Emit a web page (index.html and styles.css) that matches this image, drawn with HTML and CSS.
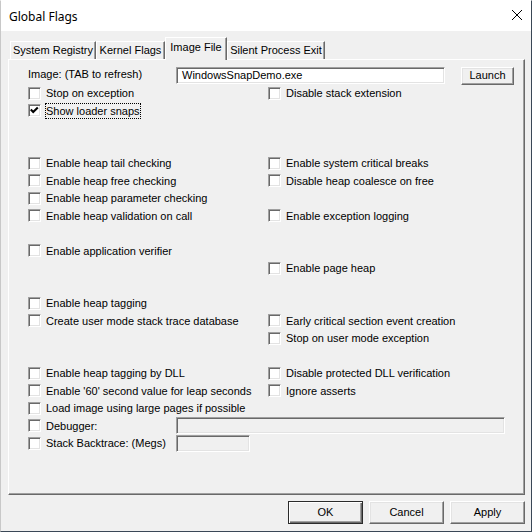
FILE: index.html
```html
<!DOCTYPE html>
<html>
<head>
<meta charset="utf-8">
<link rel="stylesheet" href="styles.css">
</head>
<body>
<div class="window">
  <div class="titlebar">
    <span class="title">Global Flags</span>
    <svg class="close" width="10" height="10" viewBox="0 0 10 10"><path d="M0 0L10 10M10 0L0 10" stroke="#000" stroke-width="1" fill="none"/></svg>
  </div>
  <div class="client">
    <div class="tabs">
      <div class="tab tab-sr">System Registry</div>
      <div class="tab tab-kf">Kernel Flags</div>
      <div class="tab tab-if active">Image File</div>
      <div class="tab tab-spe">Silent Process Exit</div>
    </div>
    <div class="panel">
      <div class="image-row">
        <span class="image-label">Image: (TAB to refresh)</span>
        <div class="edit image-edit">WindowsSnapDemo.exe</div>
        <div class="btn launch">Launch</div>
      </div>
      <div class="flags">
        <div class="cb"><span class="box"></span><span class="lbl">Stop on exception</span></div>
        <div class="cb"><span class="box"></span><span class="lbl">Disable stack extension</span></div>

        <div class="cb"><span class="box"><svg width="11" height="11" viewBox="0 0 11 11"><polyline points="1.8,4.6 4.2,7 8.8,2.4" fill="none" stroke="#000" stroke-width="2.1"/></svg></span><span class="lbl focus">Show loader snaps</span></div>
        <div></div>

        <div></div><div></div>
        <div></div><div></div>

        <div class="cb"><span class="box"></span><span class="lbl">Enable heap tail checking</span></div>
        <div class="cb"><span class="box"></span><span class="lbl">Enable system critical breaks</span></div>

        <div class="cb"><span class="box"></span><span class="lbl">Enable heap free checking</span></div>
        <div class="cb"><span class="box"></span><span class="lbl">Disable heap coalesce on free</span></div>

        <div class="cb"><span class="box"></span><span class="lbl">Enable heap parameter checking</span></div>
        <div></div>

        <div class="cb"><span class="box"></span><span class="lbl">Enable heap validation on call</span></div>
        <div class="cb"><span class="box"></span><span class="lbl">Enable exception logging</span></div>

        <div></div><div></div>

        <div class="cb"><span class="box"></span><span class="lbl">Enable application verifier</span></div>
        <div></div>

        <div></div>
        <div class="cb"><span class="box"></span><span class="lbl">Enable page heap</span></div>

        <div></div><div></div>

        <div class="cb"><span class="box"></span><span class="lbl">Enable heap tagging</span></div>
        <div></div>

        <div class="cb"><span class="box"></span><span class="lbl">Create user mode stack trace database</span></div>
        <div class="cb"><span class="box"></span><span class="lbl">Early critical section event creation</span></div>

        <div></div>
        <div class="cb"><span class="box"></span><span class="lbl">Stop on user mode exception</span></div>

        <div></div><div></div>

        <div class="cb"><span class="box"></span><span class="lbl">Enable heap tagging by DLL</span></div>
        <div class="cb"><span class="box"></span><span class="lbl">Disable protected DLL verification</span></div>

        <div class="cb"><span class="box"></span><span class="lbl">Enable '60' second value for leap seconds</span></div>
        <div class="cb"><span class="box"></span><span class="lbl">Ignore asserts</span></div>

        <div class="cb span"><span class="box"></span><span class="lbl">Load image using large pages if possible</span></div>

        <div class="field-row span">
          <div class="cb field-cb"><span class="box"></span><span class="lbl">Debugger:</span></div>
          <div class="edit disabled debugger-edit"></div>
        </div>

        <div class="field-row span">
          <div class="cb field-cb"><span class="box"></span><span class="lbl">Stack Backtrace: (Megs)</span></div>
          <div class="edit disabled stack-edit"></div>
        </div>
      </div>
    </div>
    <div class="buttons">
      <div class="btn dlg default">OK</div>
      <div class="btn dlg">Cancel</div>
      <div class="btn dlg">Apply</div>
    </div>
  </div>
</div>
</body>
</html>
```

FILE: styles.css
```css
html, body {
  margin: 0;
  padding: 0;
  background: #f0f0f0;
}

.window {
  width: 532px;
  height: 532px;
  box-sizing: border-box;
  border: 1px solid;
  border-color: #fff #3a4756 #3a4756 #c8c8c8;
  display: flex;
  flex-direction: column;
  font-family: "Liberation Sans", Arial, sans-serif;
  font-size: 11px;
  color: #000;
}

.titlebar {
  height: 30px;
  flex: none;
  background: #fff;
  display: flex;
  align-items: center;
  justify-content: space-between;
  padding: 0 9px 0 8px;
}

.title {
  font-family: "Noto Sans", "Open Sans", sans-serif;
  font-size: 12px;
  margin-top: 1px;
}

.close {
  display: block;
  margin-bottom: 2px;
}

.client {
  flex: 1;
  display: flex;
  flex-direction: column;
  background: #f0f0f0;
  padding: 6px 6px 7px 7px;
}

.tabs {
  display: flex;
  align-items: flex-end;
  height: 22px;
  margin-left: 2px;
}

.tab {
  box-sizing: border-box;
  height: 18px;
  border-top: 1px solid #fff;
  border-left: 1px solid #fff;
  border-right: 1px solid #696969;
  box-shadow: inset -1px 0 #a0a0a0;
  text-align: center;
  line-height: 17px;
  white-space: nowrap;
}

.tab-sr { width: 86px; }
.tab-kf { width: 69px; }
.tab-if { width: 62px; }
.tab-spe { width: 98px; }

.tab.active {
  height: 23px;
  margin-bottom: -1px;
  position: relative;
  z-index: 1;
  background: #f0f0f0;
  line-height: 18px;
}

.panel {
  flex: 1;
  box-sizing: border-box;
  border: 1px solid;
  border-color: #fff #696969 #696969 #fff;
  box-shadow: inset -1px -1px #a0a0a0;
  padding: 7px 0 0 19px;
}

.image-row {
  display: flex;
  align-items: flex-start;
  height: 17px;
}

.image-label {
  width: 148px;
  flex: none;
  line-height: 15px;
}

.edit {
  box-sizing: border-box;
  height: 17px;
  background: #fff;
  border: 1px solid;
  border-color: #a0a0a0 #fff #fff #a0a0a0;
  box-shadow: inset 1px 1px #696969, inset -1px -1px #e3e3e3;
  flex: none;
}

.image-edit {
  width: 269px;
  padding-left: 5px;
  line-height: 15px;
  font-size: 11px;
}

.edit.disabled {
  background: #f0f0f0;
}

.debugger-edit { width: 329px; }
.stack-edit { width: 74px; margin-top: 1px; }

.btn {
  box-sizing: border-box;
  border: 1px solid;
  border-color: #fff #696969 #696969 #fff;
  box-shadow: inset -1px -1px #a0a0a0, inset 1px 1px #e3e3e3;
  background: #f0f0f0;
  text-align: center;
  flex: none;
}

.launch {
  width: 53px;
  height: 18px;
  margin-left: 16px;
  line-height: 15px;
}

.flags {
  display: grid;
  grid-template-columns: 240px 1fr;
  grid-auto-rows: 17.5px;
  margin-top: 0.25px;
}

.cb {
  display: flex;
  align-items: center;
  gap: 5px;
  white-space: nowrap;
}

.span {
  grid-column: 1 / -1;
}

.box {
  width: 13px;
  height: 13px;
  box-sizing: border-box;
  flex: none;
  background: #fff;
  border: 1px solid;
  border-color: #a0a0a0 #fff #fff #a0a0a0;
  box-shadow: inset 1px 1px #696969, inset -1px -1px #e3e3e3;
}

.box svg {
  display: block;
}

.lbl {
  line-height: 14px;
}

.lbl.focus {
  border: 1px dotted #000;
  margin-left: -1px;
  padding-right: 0;
}

.field-row {
  display: flex;
  align-items: center;
}

.field-cb {
  width: 148px;
  flex: none;
}

.buttons {
  display: flex;
  justify-content: flex-end;
  gap: 6px;
  margin-top: 6px;
}

.btn.dlg {
  width: 75px;
  height: 23px;
  line-height: 20px;
}

.btn.default {
  border: 1px solid #2b2b2b;
  box-shadow: inset 1px 1px #fff, inset -1px -1px #696969, inset -2px -2px #a0a0a0;
}
```
